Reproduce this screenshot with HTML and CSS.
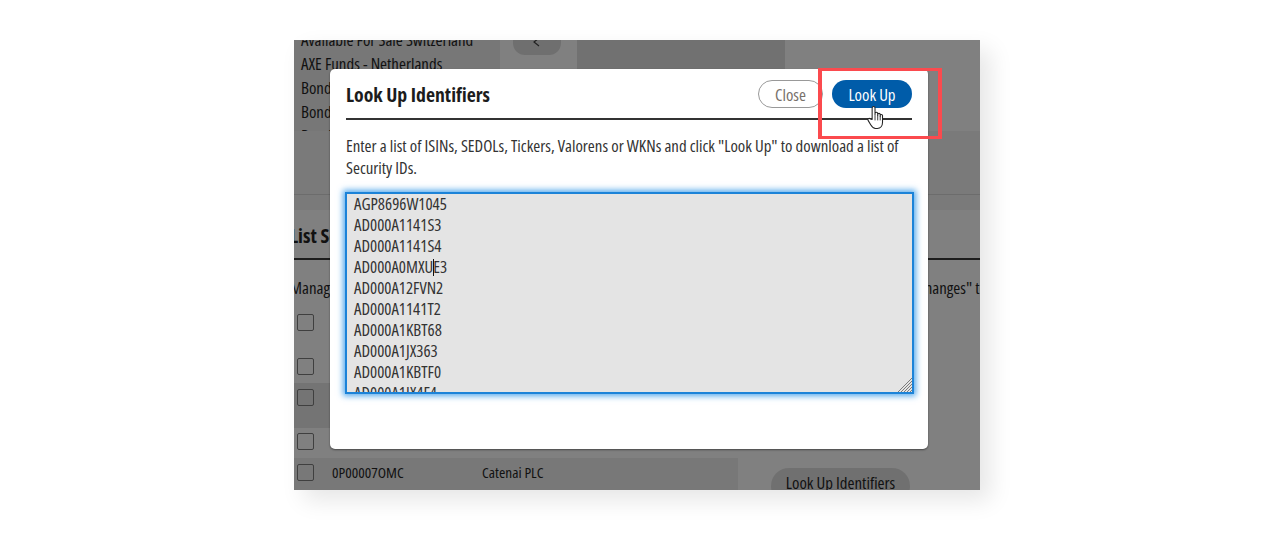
FILE: index.html
```html
<!DOCTYPE html>
<html lang="en">
<head>
<meta charset="utf-8">
<title>Look Up Identifiers</title>
<link rel="stylesheet" href="styles.css">
</head>
<body>
<div class="stage">
  <div class="page">
    <div class="top">
      <ul class="list">
        <li>Available For Sale Switzerland</li>
        <li>AXE Funds - Netherlands</li>
        <li>Bond Funds</li>
        <li>Bond Funds UK</li>
        <li>Bond Other</li>
      </ul>
      <div class="pager"><div class="arrow-btn"><svg width="12" height="8" viewBox="0 0 12 8"><path d="M8 -2 3 2 8 6" fill="none" stroke="#222" stroke-width="1.200"/></svg></div></div>
      <div class="side-list"></div>
    </div>
    <div class="spacer"></div>
    <div class="section">
      <h2 class="section-title">List Securities</h2>
      <p class="section-note"><span>Manage the securities in this list</span><span>"Save changes" to</span></p>
      <div class="section-body">
        <div class="table">
          <div class="row row-a"><span class="box"></span></div>
          <div class="row row-b"><span class="box"></span></div>
          <div class="row row-c"><span class="box"></span></div>
          <div class="row row-d"><span class="box"></span></div>
          <div class="row row-e"><span class="box"></span><span class="cell-id">0P00007OMC</span><span class="cell-name">Catenai PLC</span></div>
        </div>
        <div class="actions"><div class="action-btn">Look Up Identifiers</div></div>
      </div>
    </div>
  </div>
  <div class="modal">
    <div class="modal-head">
      <h1 class="modal-title">Look Up Identifiers</h1>
      <div class="modal-buttons">
        <button class="btn btn-close" type="button">Close</button>
        <button class="btn btn-primary" type="button">Look Up</button>
      </div>
    </div>
    <p class="modal-text">Enter a list of ISINs, SEDOLs, Tickers, Valorens or WKNs and click "Look Up" to download a list of Security IDs.</p>
    <div class="field">
      <div class="codes">
        <div>AGP8696W1045</div>
        <div>AD000A1141S3</div>
        <div>AD000A1141S4</div>
        <div>AD000A0MXU<span class="caret"></span>E3</div>
        <div>AD000A12FVN2</div>
        <div>AD000A1141T2</div>
        <div>AD000A1KBT68</div>
        <div>AD000A1JX363</div>
        <div>AD000A1KBTF0</div>
        <div>AD000A1JX4F4</div>
      </div>
      <svg class="grip" width="15" height="15" viewBox="0 0 15 15"><path d="M1 15 15 1M4 15 15 4M7 15 15 7M10 15 15 10M13 15 15 13" stroke="#7c7c7c" stroke-width="1" fill="none"/></svg>
    </div>
  </div>
  <div class="callout"></div>
  <svg class="hand" width="19" height="25" viewBox="0 0 18 26">
    <path d="M5.500 15V3a1.500 1.500 0 0 1 3 0v7.500V9a1.400 1.400 0 0 1 2.800 0v2V10a1.300 1.300 0 0 1 2.600 0v2v-1a1.200 1.200 0 0 1 2.400 0v7c0 3.500-2 6.500-5.500 6.500H9c-2.500 0-3.500-1.500-5-4L1.300 16c-.8-1.500 1-2.800 2.300-1.500z" fill="#fff" stroke="#222" stroke-width="1.100" stroke-linejoin="round"/>
    <path d="M8.500 11v5M11.300 11v5M13.900 12v4" stroke="#222" stroke-width=".9" fill="none"/>
  </svg>
</div>
</body>
</html>
```

FILE: styles.css
```css
* { box-sizing: border-box; }
html, body { margin: 0; padding: 0; height: 545px; background: #fff; overflow: hidden; }
body {
  padding: 40px 293px 55px 294px;
  font-family: "Open Sans", "Liberation Sans", sans-serif;
  font-stretch: 75%;
  color: #111;
}
.stage {
  position: relative;
  width: 686px;
  height: 450px;
  box-shadow: 10px 10px 22px rgba(0, 0, 0, .1);
}
.page {
  width: 100%;
  height: 100%;
  overflow: hidden;
  background: #808080;
}
.top { display: flex; height: 91px; }
.list {
  list-style: none;
  margin: -12px 0 0;
  padding: 0 0 0 7px;
  width: 206px;
  height: 103px;
  background: #777;
  overflow: hidden;
  font-size: 16.850px;
  line-height: 24px;
}
.pager { width: 77px; padding-left: 13px; }
.arrow-btn {
  width: 48px;
  height: 15px;
  background: #6f6f6f;
  border-radius: 0 0 12px 12px;
  overflow: hidden;
  text-align: center;
  line-height: 0;
}
.side-list { width: 208px; background: #717171; }
.spacer { height: 64px; background: #7a7a7a; border-bottom: 1px solid #6c6c6c; }
.section { border-top: 15px solid #7a7a7a; }
.section-title {
  margin: 0 0 0 -4px;
  height: 50px;
  padding-top: 14px;
  border-bottom: 2px solid #1d1d1d;
  font-size: 20px;
  line-height: 24px;
  font-weight: 700;
}
.section-note {
  display: flex;
  justify-content: space-between;
  margin: 0 -7px 0 -4px;
  height: 54px;
  padding-top: 17px;
  font-size: 16.850px;
  line-height: 22px;
}
.section-body { display: flex; }
.table { width: 444px; }
.row { display: flex; padding-left: 3px; font-size: 15.300px; line-height: 17px; }
.box {
  flex: none;
  width: 17px;
  height: 17px;
  border: 1px solid #3f3f3f;
  border-radius: 2px;
}
.row-a { height: 46px; }
.row-b { height: 23px; }
.row-b .box { margin-top: -2px; }
.row-c { height: 45px; background: #747474; padding-top: 6px; }
.row-d { height: 30px; padding-top: 5px; }
.row-e { height: 32px; background: #787878; padding-top: 6px; }
.cell-id { margin-left: 18px; width: 150px; }
.actions { padding: 154px 0 0 33px; }
.action-btn {
  width: 139px;
  height: 36px;
  border-radius: 18px;
  background: #707070;
  text-align: center;
  font-size: 16.850px;
  line-height: 30px;
}
.modal {
  position: absolute;
  left: 36px;
  top: 29px;
  width: 598px;
  height: 380px;
  padding: 11px 16px 0 16px;
  background: #fff;
  border-radius: 5px;
  box-shadow: 0 1px 2px rgba(0, 0, 0, .45);
}
.modal-head {
  display: flex;
  justify-content: space-between;
  height: 40px;
  border-bottom: 2px solid #333;
}
.modal-title { margin: 0; padding-top: 1px; font-size: 19.800px; line-height: 28px; font-weight: 700; color: #1c1c1c; }
.modal-buttons { display: flex; gap: 9px; }
.btn {
  height: 28px;
  padding: 0;
  border-radius: 14px;
  font: inherit;
  font-size: 16.850px;
}
.btn-close { width: 65px; background: #fff; border: 1px solid #999; color: #77706a; }
.btn-primary { width: 80px; background: #005ca9; border: 0; color: #fff; }
.modal-text {
  margin: 15px 0 0;
  width: 560px;
  font-size: 16.850px;
  line-height: 22px;
  color: #333;
}
.field {
  position: relative;
  margin: 13px 0 0 -1px;
  width: 569px;
  height: 202px;
  background: #e4e4e4;
  border: 2px solid #1c83d8;
  box-shadow: 0 0 6px 2px rgba(30, 140, 230, .75);
}
.codes {
  height: 198px;
  overflow: hidden;
  padding-left: 7px;
  font-size: 16.800px;
  line-height: 21px;
  color: #333;
}
.codes > :first-child { margin-top: -1px; }
.caret {
  display: inline-block;
  width: 1px;
  height: 17px;
  margin-right: -1px;
  background: #111;
  vertical-align: -3px;
}
.grip { position: absolute; right: 0; bottom: 0; }
.callout {
  position: absolute;
  left: 524px;
  top: 28px;
  width: 124px;
  height: 71px;
  border-style: solid;
  border-color: #fb4a4e;
  border-width: 3px 4px;
}
.hand { position: absolute; left: 572px; top: 65px; }
```
